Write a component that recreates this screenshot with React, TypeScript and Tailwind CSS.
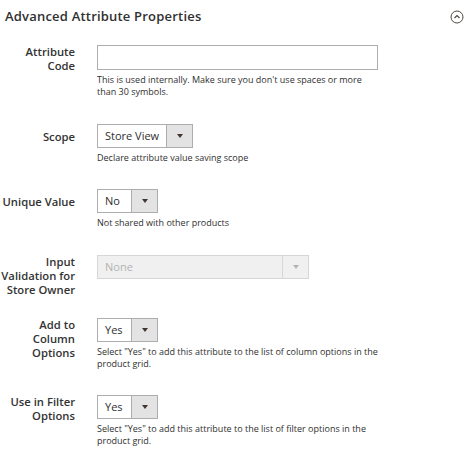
import React from "react";

const font = { fontFamily: '"Open Sans", "Liberation Sans", sans-serif' };

type SelectProps = { value: string; width: string; disabled?: boolean };

const Select = ({ value, width, disabled }: SelectProps) => (
  <div
    className={`flex h-[24px] border ${width} ${
      disabled ? "border-[#d6d6d6] bg-[#f0f0f0]" : "border-[#adadad] bg-white"
    }`}
  >
    <span
      className={`flex flex-1 items-center pl-[7px] text-[11px] ${
        disabled ? "text-[#b3b3b3]" : "text-[#303030]"
      }`}
    >
      {value}
    </span>
    <span
      className={`flex w-[26px] items-center justify-center border-l ${
        disabled ? "border-[#d6d6d6] bg-[#f0f0f0]" : "border-[#adadad] bg-[#e3e3e3]"
      }`}
    >
      <svg width="6" height="4" viewBox="0 0 6 4">
        <path d="M0 0H6L3 4Z" fill={disabled ? "#b3b3b3" : "#41362f"} />
      </svg>
    </span>
  </div>
);

const Help = ({ children }: { children: React.ReactNode }) => (
  <p className="mt-[4px] text-[9px] leading-[12px] text-[#303030]">{children}</p>
);

const Row = ({
  label,
  children,
  mb,
}: {
  label: React.ReactNode;
  children: React.ReactNode;
  mb: string;
}) => (
  <div className={`grid grid-cols-[75px_281px] gap-x-[22px] ${mb}`}>
    <div className="flex flex-col items-end whitespace-nowrap text-[11.25px] font-semibold leading-[14px] text-[#333]">
      {label}
    </div>
    <div>{children}</div>
  </div>
);

export default function App() {
  return (
    <div className="h-[472px] w-[474px] bg-white" style={font}>
      <div className="flex h-[33px] items-center justify-between pl-[5px] pr-[10px]">
        <h2 className="text-[13px] font-semibold tracking-[0.2px] text-[#303030]">
          Advanced Attribute Properties
        </h2>
        <svg width="14" height="14" viewBox="0 0 14 14" fill="none">
          <circle cx="7" cy="7" r="6" stroke="#514943" strokeWidth="1" />
          <path d="M4.5 8L7 5.5L9.5 8" stroke="#514943" strokeWidth="1.2" />
        </svg>
      </div>

      <div className="pt-[12px]">
        <Row mb="mb-[26px]" label={<><span>Attribute</span><span>Code</span></>}>
          <div className="h-[25px] border border-[#adadad] bg-white" />
          <Help>
            This is used internally. Make sure you don't use spaces or more than 30 symbols.
          </Help>
        </Row>

        <Row mb="mb-[25px]" label={<span className="pt-[6px]">Scope</span>}>
          <Select value="Store View" width="w-[96px]" />
          <Help>Declare attribute value saving scope</Help>
        </Row>

        <Row mb="mb-[26px]" label={<span className="pt-[6px]">Unique Value</span>}>
          <Select value="No" width="w-[61px]" />
          <Help>Not shared with other products</Help>
        </Row>

        <Row
          mb="mb-[21px]"
          label={
            <>
              <span>Input</span>
              <span>Validation for</span>
              <span>Store Owner</span>
            </>
          }
        >
          <Select value="None" width="w-[212px]" disabled />
        </Row>

        <Row
          mb="mb-[25px]"
          label={
            <>
              <span>Add to</span>
              <span>Column</span>
              <span>Options</span>
            </>
          }
        >
          <Select value="Yes" width="w-[61px]" />
          <Help>
            Select "Yes" to add this attribute to the list of column options in the product grid.
          </Help>
        </Row>

        <Row mb="mb-[0px]" label={<><span>Use in Filter</span><span>Options</span></>}>
          <Select value="Yes" width="w-[61px]" />
          <Help>
            Select "Yes" to add this attribute to the list of filter options in the product grid.
          </Help>
        </Row>
      </div>
    </div>
  );
}
